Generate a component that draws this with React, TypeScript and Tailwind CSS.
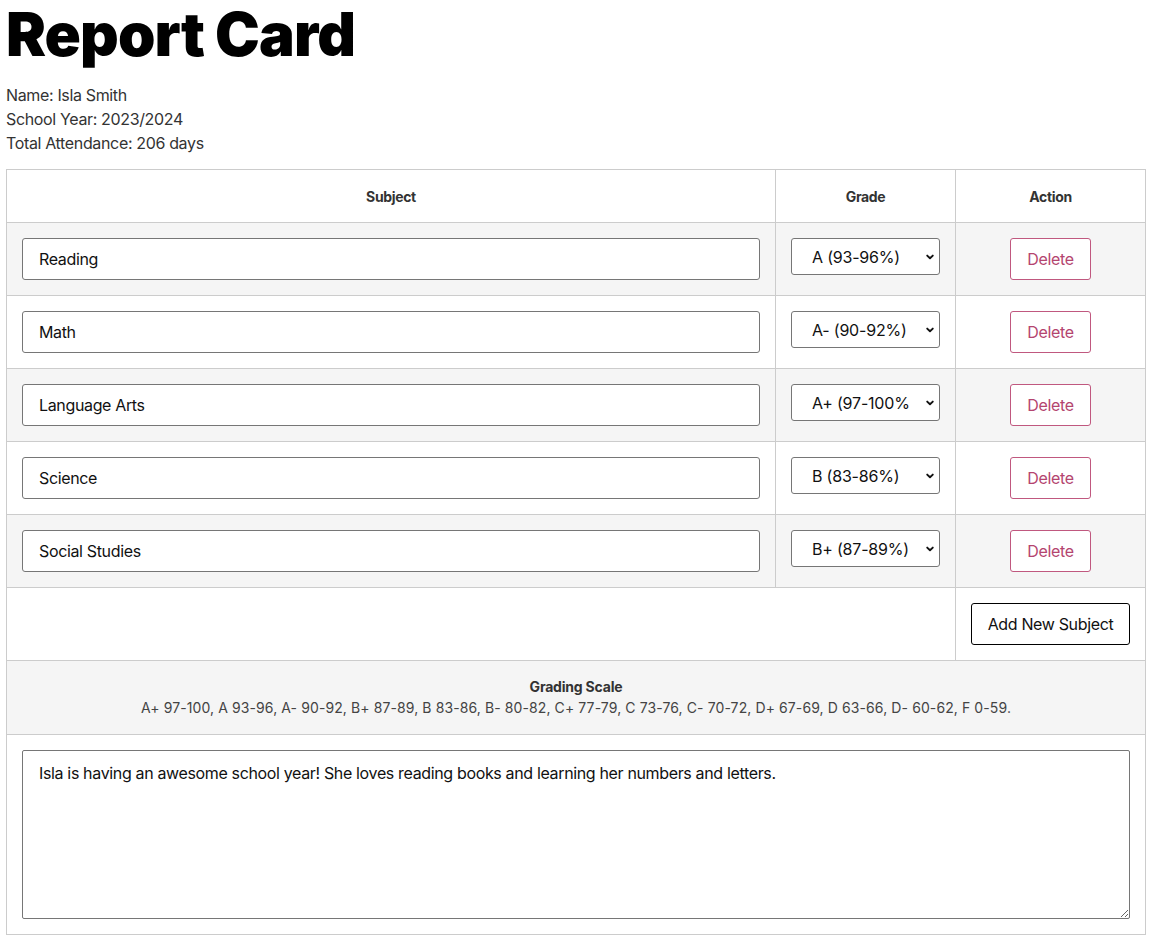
import React from "react";

const rows = [
  { subject: "Reading", grade: "A (93-96%)" },
  { subject: "Math", grade: "A- (90-92%)" },
  { subject: "Language Arts", grade: "A+ (97-100%)" },
  { subject: "Science", grade: "B (83-86%)" },
  { subject: "Social Studies", grade: "B+ (87-89%)" },
];

const grades = [
  "A+ (97-100%)",
  "A (93-96%)",
  "A- (90-92%)",
  "B+ (87-89%)",
  "B (83-86%)",
  "B- (80-82%)",
  "C+ (77-79%)",
  "C (73-76%)",
  "C- (70-72%)",
  "D+ (67-69%)",
  "D (63-66%)",
  "D- (60-62%)",
  "F (0-59%)",
];

function Chevron() {
  return (
    <svg width="10" height="10" viewBox="0 0 10 10" className="pointer-events-none absolute right-[5px] top-1/2 -translate-y-1/2">
      <path d="M2.2 3.6 L5 6.3 L7.8 3.6" fill="none" stroke="#111" strokeWidth="1.9" strokeLinecap="round" strokeLinejoin="round" />
    </svg>
  );
}

export default function App() {
  return (
    <div className="pl-[6px] pr-[8px] pb-[6px] text-[#333]" style={{ fontFamily: "Inter, 'Noto Sans', sans-serif" }}>
      <h1 className="m-0 text-[60px] font-black leading-[68px] tracking-[-0.9px] text-black">Report Card</h1>
      <div className="mt-[15px] text-[16px] leading-[24px] tracking-[-0.35px] text-[#333]">
        <div>Name: Isla Smith</div>
        <div>School Year: 2023/2024</div>
        <div>Total Attendance: 206 days</div>
      </div>
      <table className="mt-[14px] w-full border-collapse border border-[#ccc] tracking-[-0.35px]">
        <thead>
          <tr className="h-[53px]">
            <th className="border border-[#ccc] text-[14px] font-bold text-[#333]">Subject</th>
            <th className="w-[180px] border border-[#ccc] text-[14px] font-bold text-[#333]">Grade</th>
            <th className="w-[190px] border border-[#ccc] text-[14px] font-bold text-[#333]">Action</th>
          </tr>
        </thead>
        <tbody>
          {rows.map((r, i) => (
            <tr key={r.subject} className={i % 2 === 0 ? "bg-[#f5f5f5]" : "bg-white"}>
              <td className="border border-[#ccc] p-[15px]">
                <input
                  defaultValue={r.subject}
                  className="block h-[42px] w-full rounded-[3px] border border-[#767676] bg-white px-4 text-[16px] tracking-[-0.35px] text-[#111] outline-none"
                />
              </td>
              <td className="border border-[#ccc] p-[15px] align-top">
                <div className="relative w-[149px]">
                  <select
                    defaultValue={r.grade}
                    className="block h-[37px] w-full appearance-none overflow-hidden rounded-[3px] border border-[#767676] bg-white pl-5 pr-[30px] text-[16px] tracking-[-0.2px] text-[#111] outline-none"
                  >
                    {grades.map((g) => (
                      <option key={g} value={g}>
                        {g}
                      </option>
                    ))}
                  </select>
                  <Chevron />
                </div>
              </td>
              <td className="border border-[#ccc] p-[15px] text-center">
                <button className="h-[42px] w-[81px] rounded-[3px] border border-[#c0587f] bg-white text-[16px] tracking-[-0.35px] text-[#b4456f]">
                  Delete
                </button>
              </td>
            </tr>
          ))}
          <tr className="h-[73px]">
            <td className="border border-[#ccc]" colSpan={2}></td>
            <td className="border border-[#ccc] p-[15px] text-center">
              <button className="h-[42px] w-[159px] rounded-[3px] border border-black bg-white text-[16px] tracking-[-0.35px] text-[#111]">
                Add New Subject
              </button>
            </td>
          </tr>
          <tr className="h-[74px] bg-[#f5f5f5]">
            <td colSpan={3} className="border border-[#ccc] pb-[2px] text-center">
              <div className="text-[14px] font-bold leading-[21px] tracking-[-0.2px] text-[#333]">Grading Scale</div>
              <div className="text-[14px] leading-[21px] tracking-[0.1px] text-[#444]">
                A+ 97-100, A 93-96, A- 90-92, B+ 87-89, B 83-86, B- 80-82, C+ 77-79, C 73-76, C- 70-72, D+ 67-69, D 63-66, D- 60-62, F 0-59.
              </div>
            </td>
          </tr>
          <tr>
            <td colSpan={3} className="border border-[#ccc] p-[15px]">
              <textarea
                defaultValue="Isla is having an awesome school year! She loves reading books and learning her numbers and letters."
                className="block h-[169px] w-full rounded-[2px] border border-[#767676] bg-white px-4 py-[12px] text-[16px] leading-[20px] tracking-[-0.35px] text-[#111] outline-none"
              />
            </td>
          </tr>
        </tbody>
      </table>
    </div>
  );
}
